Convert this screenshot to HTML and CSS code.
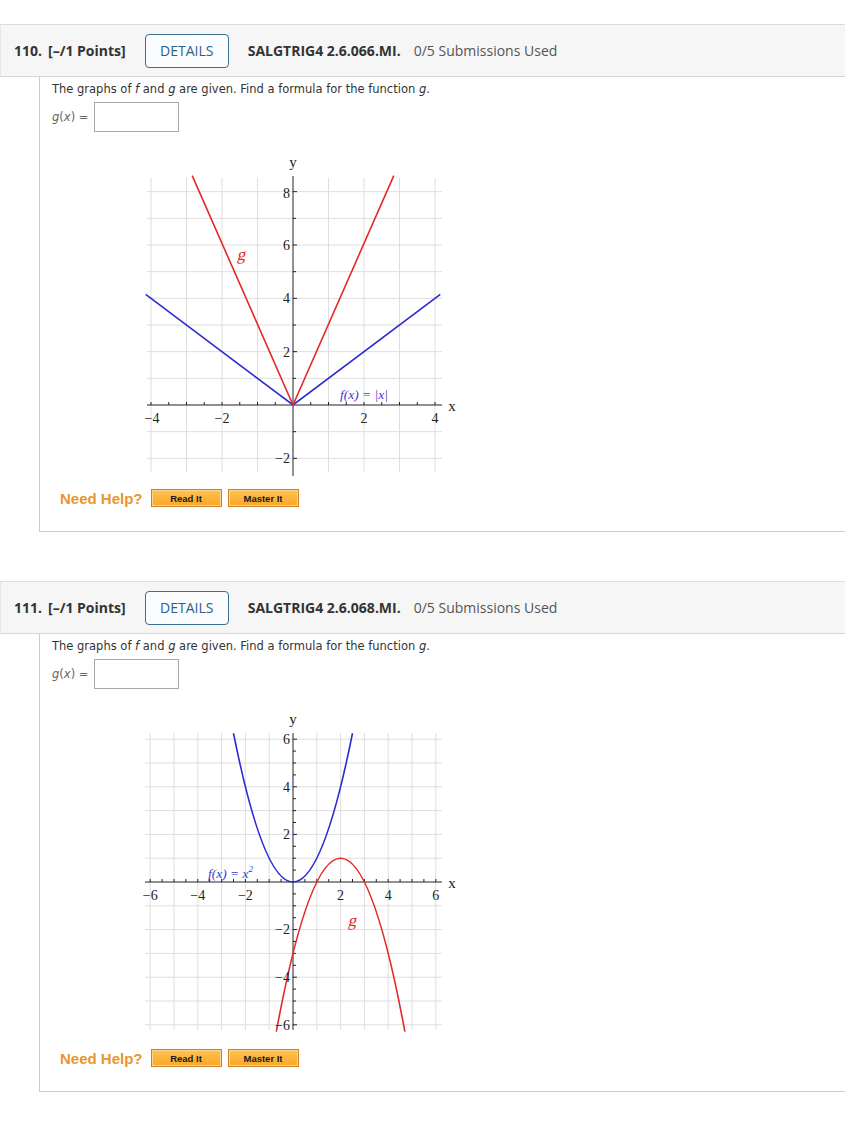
FILE: index.html
```html
<!DOCTYPE html>
<html>
<head>
<meta charset="utf-8">
<link rel="stylesheet" href="styles.css">
</head>
<body>
<div class="page">
  <section class="question">
    <div class="q-header">
      <span class="q-num">110.</span>
      <span class="points">[–/1 Points]</span>
      <span class="details-btn">DETAILS</span>
      <span class="code">SALGTRIG4 2.6.066.MI.</span>
      <span class="subs">0/5 Submissions Used</span>
    </div>
    <div class="q-body">
      <p class="prompt">The graphs of <i>f</i> and <i>g</i> are given. Find a formula for the function <i>g</i>.</p>
      <div class="answer-row"><span class="ans-label"><i>g</i>(<i>x</i>) =</span><span class="ans-box"></span></div>
      <svg class="graph graph-one" width="320" height="332" viewBox="0 -2 320 332">
        <path class="grid" d="M11 28V322M46.5 28V322M82 28V322M117.5 28V322M188.5 28V322M224 28V322M259.5 28V322M295 28V322M7 41.67H302M7 68.33H302M7 95H302M7 121.67H302M7 148.33H302M7 175H302M7 201.67H302M7 228.33H302M7 281.67H302M7 308.33H302"/>
        <path class="axis" d="M7 255H302M153 26V326"/>
        <path class="axis" d="M11 255v-3M28.75 255v-3M46.5 255v-3M64.25 255v-3M82 255v-3M99.75 255v-3M117.5 255v-3M135.25 255v-3M170.75 255v-3M188.5 255v-3M206.25 255v-3M224 255v-3M241.75 255v-3M259.5 255v-3M277.25 255v-3M295 255v-3M153 41.67h4M153 68.33h3M153 95h4M153 121.67h3M153 148.33h4M153 175h3M153 201.67h4M153 228.33h3M153 281.67h3M153 308.33h4"/>
        <polyline class="blue" points="5.7,144.3 153,255 300.3,144.3"/>
        <polyline class="red" points="52.2,25.6 153,255 253.8,25.6"/>
        <g class="ticklabel">
          <text x="12" y="273" text-anchor="middle">−4</text>
          <text x="82" y="273" text-anchor="middle">−2</text>
          <text x="224" y="273" text-anchor="middle">2</text>
          <text x="295" y="273" text-anchor="middle">4</text>
          <text x="150" y="47.5" text-anchor="end">8</text>
          <text x="150" y="100" text-anchor="end">6</text>
          <text x="150" y="153" text-anchor="end">4</text>
          <text x="150" y="206.5" text-anchor="end">2</text>
          <text x="150" y="313" text-anchor="end">−2</text>
        </g>
        <text class="axislabel" x="153" y="17" text-anchor="middle">y</text>
        <text class="axislabel" x="312" y="261" text-anchor="middle">x</text>
        <text class="fn-red" transform="translate(101 110) skewX(-12)" text-anchor="middle">g</text>
        <text class="fn-blue" x="200" y="249">f(x) = |x|</text>
      </svg>
      <div class="help-row">
        <span class="need-help">Need Help?</span>
        <span class="help-btn">Read It</span>
        <span class="help-btn">Master It</span>
      </div>
    </div>
  </section>

  <section class="question">
    <div class="q-header">
      <span class="q-num">111.</span>
      <span class="points">[–/1 Points]</span>
      <span class="details-btn">DETAILS</span>
      <span class="code">SALGTRIG4 2.6.068.MI.</span>
      <span class="subs">0/5 Submissions Used</span>
    </div>
    <div class="q-body">
      <p class="prompt">The graphs of <i>f</i> and <i>g</i> are given. Find a formula for the function <i>g</i>.</p>
      <div class="answer-row"><span class="ans-label"><i>g</i>(<i>x</i>) =</span><span class="ans-box"></span></div>
      <svg class="graph graph-two" width="320" height="335" viewBox="0 0 320 335">
        <path class="grid" d="M10.2 28V325M34 28V325M57.8 28V325M81.6 28V325M105.4 28V325M129.2 28V325M176.8 28V325M200.6 28V325M224.4 28V325M248.2 28V325M272 28V325M295.8 28V325M5 34.2H302M5 58H302M5 81.8H302M5 105.6H302M5 129.4H302M5 153.2H302M5 200.8H302M5 224.6H302M5 248.4H302M5 272.2H302M5 296H302M5 319.8H302"/>
        <path class="axis" d="M5 177H302M153 28V325"/>
        <path class="axis" d="M10.2 177v-3M22.1 177v-3M34 177v-3M45.9 177v-3M57.8 177v-3M69.7 177v-3M81.6 177v-3M93.5 177v-3M105.4 177v-3M117.3 177v-3M129.2 177v-3M141.1 177v-3M164.9 177v-3M176.8 177v-3M188.7 177v-3M200.6 177v-3M212.5 177v-3M224.4 177v-3M236.3 177v-3M248.2 177v-3M260.1 177v-3M272 177v-3M283.9 177v-3M295.8 177v-3M153 34.2h4M153 46.1h3M153 58h3M153 69.9h3M153 81.8h4M153 93.7h3M153 105.6h3M153 117.5h3M153 129.4h4M153 141.3h3M153 153.2h3M153 165.1h3M153 188.9h3M153 200.8h3M153 212.7h3M153 224.6h4M153 236.5h3M153 248.4h3M153 260.3h3M153 272.2h4M153 284.1h3M153 296h3M153 307.9h3M153 319.8h4"/>
        <path class="blue" d="M93.5 28.25Q153 325.75 212.5 28.25"/>
        <path class="red" d="M136.3 326.7Q200.6 -20.3 264.9 326.7"/>
        <g class="ticklabel">
          <text x="10.2" y="195" text-anchor="middle">−6</text>
          <text x="57.8" y="195" text-anchor="middle">−4</text>
          <text x="105.4" y="195" text-anchor="middle">−2</text>
          <text x="200.6" y="195" text-anchor="middle">2</text>
          <text x="248.2" y="195" text-anchor="middle">4</text>
          <text x="295.8" y="195" text-anchor="middle">6</text>
          <text x="150" y="39" text-anchor="end">6</text>
          <text x="150" y="86.5" text-anchor="end">4</text>
          <text x="150" y="134" text-anchor="end">2</text>
          <text x="150" y="229" text-anchor="end">−2</text>
          <text x="150" y="277" text-anchor="end">−4</text>
          <text x="150" y="324.5" text-anchor="end">−6</text>
        </g>
        <text class="axislabel" x="153" y="19" text-anchor="middle">y</text>
        <text class="axislabel" x="312" y="183" text-anchor="middle">x</text>
        <text class="fn-red" transform="translate(212 221) skewX(-12)" text-anchor="middle">g</text>
        <text class="fn-blue" x="68" y="173">f(x) = x<tspan class="sup" dy="-6">2</tspan></text>
      </svg>
      <div class="help-row">
        <span class="need-help">Need Help?</span>
        <span class="help-btn">Read It</span>
        <span class="help-btn">Master It</span>
      </div>
    </div>
  </section>
</div>
</body>
</html>
```

FILE: styles.css
```css
html, body {
  margin: 0;
  padding: 0;
  background: #ffffff;
}

body {
  font-family: "Open Sans", "DejaVu Sans", sans-serif;
  color: #333333;
}

.page {
  padding-top: 24px;
}

.question + .question {
  margin-top: 49px;
}

.q-header {
  display: flex;
  align-items: center;
  height: 51px;
  background: #f6f6f6;
  border-top: 1px solid #dcdcdc;
  border-bottom: 1px solid #d6d6d6;
  border-left: 1px solid #e6e6e6;
  padding-left: 13px;
  font-size: 14px;
  color: #333333;
}

.q-num {
  font-weight: 700;
}

.points {
  font-weight: 700;
  margin-left: 6px;
}

.details-btn {
  display: flex;
  align-items: center;
  justify-content: center;
  box-sizing: border-box;
  width: 84px;
  height: 34px;
  margin-left: 19px;
  border: 1px solid #3f6f90;
  border-radius: 4px;
  background: #fbfcfd;
  color: #2c5f86;
  font-size: 14px;
}

.code {
  font-weight: 700;
  margin-left: 19px;
}

.subs {
  margin-left: 13px;
  color: #555555;
}

.q-body {
  margin-left: 39px;
  border-left: 1px solid #cccccc;
  border-bottom: 1px solid #cccccc;
  padding: 4px 0 24px 12px;
  font-family: "DejaVu Sans", "Open Sans", sans-serif;
  font-size: 11.5px;
  color: #333333;
}

.prompt {
  margin: 0;
  line-height: 17px;
}

.answer-row {
  display: flex;
  align-items: center;
  margin-top: 4px;
}

.ans-label {
  color: #666666;
  margin-right: 6px;
}

.ans-box {
  display: block;
  box-sizing: border-box;
  width: 85px;
  height: 30px;
  border: 1px solid #a8a8a8;
  background: #ffffff;
}

.graph {
  display: block;
  margin-top: 16px;
  margin-left: 88px;
}

.grid {
  fill: none;
  stroke: #dedede;
  stroke-width: 1;
}

.axis {
  fill: none;
  stroke: #222222;
  stroke-width: 1;
}

.blue {
  fill: none;
  stroke: #2b2bd1;
  stroke-width: 1.6;
}

.red {
  fill: none;
  stroke: #e5282a;
  stroke-width: 1.6;
}

.ticklabel text {
  font-family: "Liberation Serif", "DejaVu Serif", serif;
  font-size: 14px;
  fill: #222222;
}

.axislabel {
  font-family: "Liberation Serif", "DejaVu Serif", serif;
  font-size: 15px;
  fill: #222222;
}

.fn-red {
  font-family: "Liberation Serif", "DejaVu Serif", serif;
  font-size: 17px;
  fill: #e5282a;
}

.fn-blue {
  font-family: "Liberation Serif", "DejaVu Serif", serif;
  font-style: italic;
  font-size: 13.5px;
  fill: #3a3ad0;
}

.sup {
  font-size: 9px;
}

.help-row {
  display: flex;
  align-items: center;
  height: 18px;
  margin-top: 9px;
  padding-left: 8px;
}

.need-help {
  font-family: "Liberation Sans", Arial, sans-serif;
  font-weight: 700;
  font-size: 15px;
  color: #e8962e;
  margin-right: 8px;
}

.help-btn {
  display: flex;
  align-items: center;
  justify-content: center;
  box-sizing: border-box;
  width: 71px;
  height: 18px;
  margin-right: 6px;
  border: 1px solid #cf8024;
  box-shadow: inset 0 0 0 1px #ffd58a;
  background: linear-gradient(#ffc450, #f9a62a);
  font-family: "Liberation Sans", Arial, sans-serif;
  font-weight: 700;
  font-size: 9.5px;
  color: #1a1a1a;
}
```
